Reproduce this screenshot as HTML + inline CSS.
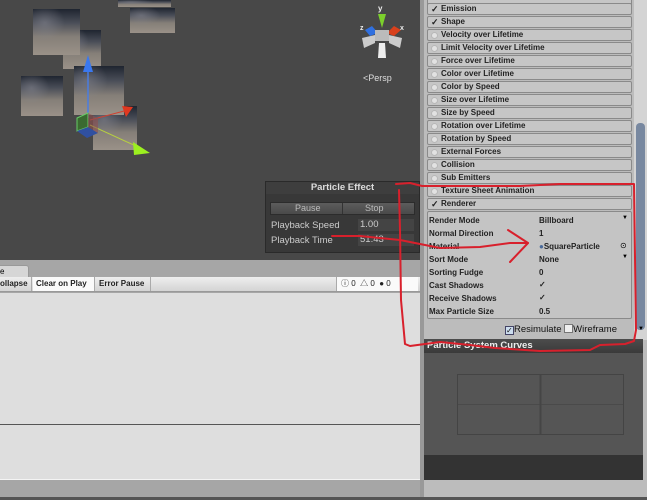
<!DOCTYPE html>
<html><head><style>
*{margin:0;padding:0;box-sizing:border-box}
body{width:647px;height:500px;overflow:hidden;position:relative;background:#484848;font-family:"Liberation Sans",sans-serif;font-size:8.5px}
.a{position:absolute}
.p{position:absolute;background:radial-gradient(ellipse at 25% 30%,rgba(140,140,150,.5) 0%,transparent 40%),linear-gradient(180deg,#1f2530 0%,#4a4e58 30%,#857f78 60%,#9a9188 100%)}
.row{position:absolute;left:427px;width:205px;height:12px;background:#c6c6c6;border:1px solid #8a8a8a;border-radius:2px;font-weight:bold;color:#222;line-height:10px;padding-left:13px;font-size:8px}
.row .c{position:absolute;left:3px;top:2px;width:7px;height:7px;border-radius:50%;background:#e2e2e2;border:1px solid #b8b8b8}
.row .k{position:absolute;left:3px;top:0;font-size:9px}
.l{position:absolute;left:429px;font-size:8px;color:#222;font-weight:bold}
.v{position:absolute;left:539px;font-size:8px;color:#222;font-weight:bold}
</style></head><body>
<!-- scene -->
<div class="p" style="left:118px;top:0;width:53px;height:7px"></div>
<div class="p" style="left:130px;top:8px;width:45px;height:25px"></div>
<div class="p" style="left:63px;top:30px;width:38px;height:39px"></div>
<div class="p" style="left:33px;top:9px;width:47px;height:46px"></div>
<div class="p" style="left:21px;top:76px;width:42px;height:40px"></div>
<div class="p" style="left:93px;top:106px;width:44px;height:44px"></div>
<div class="p" style="left:74px;top:66px;width:50px;height:49px"></div>
<svg class="a" style="left:0;top:0" width="420" height="260">
<line x1="88" y1="70" x2="88" y2="118" stroke="#4a7de0" stroke-width="1.5"/>
<polygon points="83,72 93,72 88,55" fill="#3a78f0"/>
<line x1="90" y1="120" x2="128" y2="110" stroke="#d04030" stroke-width="1"/>
<polygon points="122,106 133,107 126,117" fill="#e03820"/>
<line x1="90" y1="125" x2="138" y2="147" stroke="#b8d040" stroke-width="1"/>
<polygon points="133,142 150,153 134,155" fill="#9cf020"/>
<polygon points="77,118 88,113 88,127 77,131" fill="#3a6a30" stroke="#6c6"/>
<polygon points="77,131 88,127 98,133 87,138" fill="#3050a0"/>
<polygon points="88,113 98,118 98,133 88,127" fill="#905050" opacity=".6"/>
<polygon points="378,14 386,14 382,28" fill="#7cd02c"/>
<polygon points="365,30 372,26 378,33 370,36" fill="#3070e0"/>
<polygon points="394,26 401,30 394,36 387,33" fill="#d8401c"/>
<rect x="375" y="30" width="14" height="11" fill="#bbb"/>
<polygon points="362,38 375,35 375,43 364,48" fill="#ccc"/>
<polygon points="402,38 389,35 389,43 400,48" fill="#ccc"/>
<polygon points="379,43 385,43 386,58 378,58" fill="#eee"/>
<text x="378" y="11" fill="#eee" font-size="8" font-weight="bold" font-family="Liberation Sans">y</text>
<text x="360" y="30" fill="#eee" font-size="7" font-weight="bold" font-family="Liberation Sans">z</text>
<text x="400" y="30" fill="#eee" font-size="7" font-weight="bold" font-family="Liberation Sans">x</text>
<text x="363" y="81" fill="#ddd" font-size="9" font-family="Liberation Sans">&lt;Persp</text>
</svg>
<!-- particle effect panel -->
<div class="a" style="left:265px;top:181px;width:155px;height:72px;background:#383838;border:1px solid #2a2a2a">
 <div style="height:12px;background:#3e3e3e;color:#ddd;font-weight:bold;font-size:9.5px;text-align:center;line-height:12px">Particle Effect</div>
 <div class="a" style="left:4px;top:20px;width:145px;height:13px;background:linear-gradient(#5c5c5c,#4a4a4a);border:1px solid #2c2c2c;color:#bbb;font-size:9px;line-height:11px">
  <span class="a" style="left:24px">Pause</span><span class="a" style="left:94px">Stop</span>
  <div class="a" style="left:71px;top:0;width:1px;height:11px;background:#333"></div></div>
 <div class="a" style="left:5px;top:38px;color:#ccc;font-size:9.5px">Playback Speed</div>
 <div class="a" style="left:92px;top:37px;width:56px;height:12px;background:#444;color:#ccc;font-size:9.5px;padding-left:2px">1.00</div>
 <div class="a" style="left:5px;top:53px;color:#ccc;font-size:9.5px">Playback Time</div>
 <div class="a" style="left:92px;top:52px;width:56px;height:12px;background:#444;color:#ccc;font-size:9.5px;padding-left:2px">51.43</div>
</div>
<!-- console -->
<div class="a" style="left:0;top:260px;width:422px;height:240px;background:#a6a6a6"></div>
<div class="a" style="left:0;top:265px;width:29px;height:13px;background:#d6d6d6;border:1px solid #999;border-left:0;border-radius:0 3px 0 0;font-size:8px;padding-top:1px">e</div>
<div class="a" style="left:0;top:277px;width:420px;height:15px;background:linear-gradient(#eee,#d4d4d4);border-bottom:1px solid #999;font-size:8px;font-weight:bold;color:#222;line-height:14px">
 <span class="a" style="left:0;width:32px;border-right:1px solid #aaa;padding-left:0">ollapse</span>
 <span class="a" style="left:33px;width:62px;background:#fafafa;border-right:1px solid #aaa;padding-left:3px">Clear on Play</span>
 <span class="a" style="left:96px;width:55px;border-right:1px solid #aaa;padding-left:3px">Error Pause</span>
 <span class="a" style="left:336px;width:82px;height:14px;background:#fafafa;border-left:1px solid #aaa;padding-left:4px;font-weight:normal">ⓘ 0 &nbsp;△ 0 &nbsp;● 0</span>
</div>
<div class="a" style="left:0;top:293px;width:420px;height:187px;background:#dedede;border-bottom:1px solid #f4f4f4"></div>
<div class="a" style="left:0;top:424px;width:420px;height:1px;background:#555"></div>
<div class="a" style="left:0;top:497px;width:420px;height:3px;background:#555"></div>
<!-- inspector -->
<div class="a" style="left:420px;top:0;width:227px;height:500px;background:#bcbcbc;border-left:4px solid #999"></div>
<div class="a" style="left:634px;top:0;width:13px;height:340px;background:#d4d4d4"></div>
<div class="a" style="left:636px;top:123px;width:9px;height:207px;background:#7888a0;border-radius:4px"></div>
<div class="row" style="top:-4px"></div>
<div class="row" style="top:3px"><span class="k">✓</span>Emission</div>
<div class="row" style="top:16px"><span class="k">✓</span>Shape</div>
<div class="row" style="top:29px"><span class="c"></span>Velocity over Lifetime</div>
<div class="row" style="top:42px"><span class="c"></span>Limit Velocity over Lifetime</div>
<div class="row" style="top:55px"><span class="c"></span>Force over Lifetime</div>
<div class="row" style="top:68px"><span class="c"></span>Color over Lifetime</div>
<div class="row" style="top:81px"><span class="c"></span>Color by Speed</div>
<div class="row" style="top:94px"><span class="c"></span>Size over Lifetime</div>
<div class="row" style="top:107px"><span class="c"></span>Size by Speed</div>
<div class="row" style="top:120px"><span class="c"></span>Rotation over Lifetime</div>
<div class="row" style="top:133px"><span class="c"></span>Rotation by Speed</div>
<div class="row" style="top:146px"><span class="c"></span>External Forces</div>
<div class="row" style="top:159px"><span class="c"></span>Collision</div>
<div class="row" style="top:172px"><span class="c"></span>Sub Emitters</div>
<div class="row" style="top:185px"><span class="c"></span>Texture Sheet Animation</div>
<div class="row" style="top:198px"><span class="k">✓</span>Renderer</div>
<div class="a" style="left:427px;top:211px;width:205px;height:108px;background:#c4c4c4;border:1px solid #8a8a8a;border-radius:2px"></div>
<div class="l" style="top:216px">Render Mode</div><div class="v" style="top:216px">Billboard</div><div class="a" style="left:622px;top:215px;font-size:6px">▼</div>
<div class="l" style="top:229px">Normal Direction</div><div class="v" style="top:229px">1</div>
<div class="l" style="top:242px">Material</div><div class="v" style="top:242px"><span style="color:#4a6a9a">●</span>SquareParticle</div><div class="a" style="left:620px;top:241px;font-size:8px">⊙</div>
<div class="l" style="top:255px">Sort Mode</div><div class="v" style="top:255px">None</div><div class="a" style="left:622px;top:254px;font-size:6px">▼</div>
<div class="l" style="top:268px">Sorting Fudge</div><div class="v" style="top:268px">0</div>
<div class="l" style="top:281px">Cast Shadows</div><div class="v" style="top:280px">✓</div>
<div class="l" style="top:294px">Receive Shadows</div><div class="v" style="top:293px">✓</div>
<div class="l" style="top:307px">Max Particle Size</div><div class="v" style="top:307px">0.5</div>
<div class="a" style="left:505px;top:324px;font-size:9.5px;color:#111"><span style="display:inline-block;width:9px;height:9px;border:1px solid #446;background:#cde;vertical-align:-1px;font-size:8px;line-height:8px">✓</span>Resimulate <span style="display:inline-block;width:9px;height:9px;border:1px solid #777;background:#eee;vertical-align:-1px"></span>Wireframe</div>
<div class="a" style="left:638px;top:326px;font-size:6px">▼</div>
<div class="a" style="left:424px;top:339px;width:219px;height:14px;background:linear-gradient(#4c4c4c,#3a3a3a);color:#eee;font-weight:bold;font-size:9.5px;padding-left:3px;line-height:13px">Particle System Curves</div>
<div class="a" style="left:424px;top:353px;width:219px;height:102px;background:#555"></div>
<div class="a" style="left:457px;top:374px;width:167px;height:61px;border:1px solid #444;background:linear-gradient(90deg,transparent 49.5%,#454545 49.5%,#454545 50.5%,transparent 50.5%),linear-gradient(transparent 49%,#4a4a4a 49%,#4a4a4a 51%,transparent 51%)"></div>
<div class="a" style="left:424px;top:455px;width:219px;height:25px;background:#333"></div>
<div class="a" style="left:420px;top:497px;width:227px;height:3px;background:#555"></div>
<!-- red annotations -->
<svg class="a" style="left:0;top:0" width="647" height="500">
<g fill="none" stroke="#d8202c" stroke-width="2" stroke-linejoin="round" stroke-linecap="round">
<path d="M396,184 L410,183 L422,186 L520,186 L560,184 L634,184 L636,330 L634,341 L625,344 L600,345 L590,350 L540,351 L495,348 L470,345 L440,342 L410,346 L405,344 L401,300 L400,230 L399,190"/>
<path d="M332,236 L360,236 L400,240 L440,248 L480,247 L510,243 L528,243"/>
<path d="M508,230 L528,243 L510,262"/>
</g></svg>
</body></html>
